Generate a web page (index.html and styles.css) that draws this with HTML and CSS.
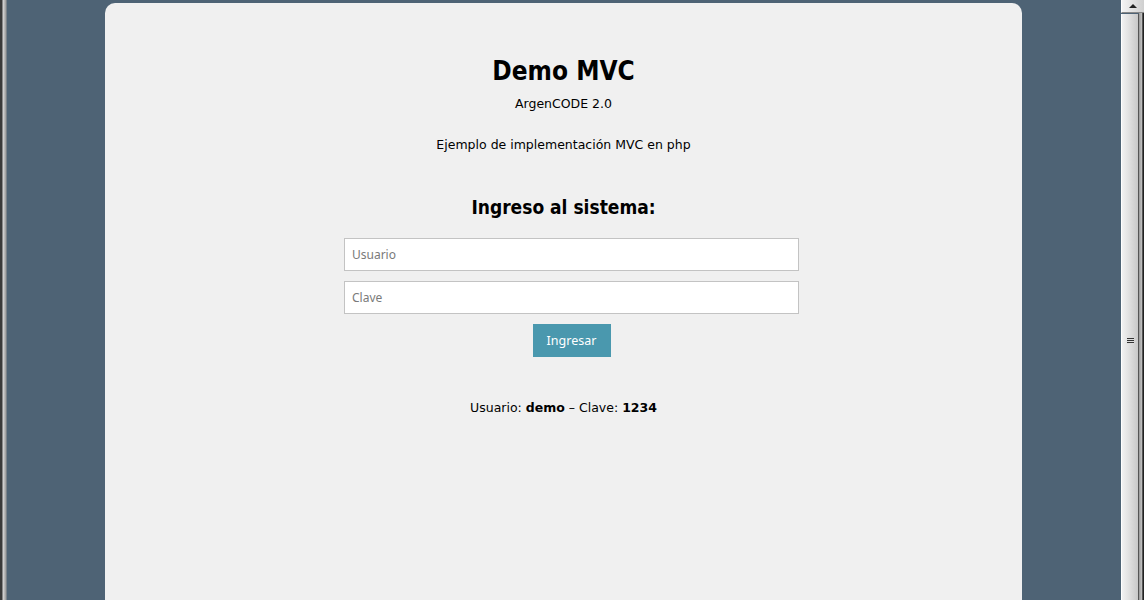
FILE: index.html
```html
<!DOCTYPE html>
<html lang="es">
<head>
    <meta charset="UTF-8">
    <title>Demo MVC</title>
    <link rel="stylesheet" href="styles.css">
</head>
<body>
<div class="frame-left"></div>
<div class="viewport">
    <div class="card">
        <h1>Demo MVC</h1>
        <p class="version">ArgenCODE 2.0</p>
        <p class="desc">Ejemplo de implementación MVC en php</p>

        <h2>Ingreso al sistema:</h2>
        <form class="login" onsubmit="return false;">
            <input type="text" placeholder="Usuario">
            <input type="password" placeholder="Clave">
            <button type="submit" class="btn">Ingresar</button>
        </form>

        <p class="hint">Usuario: <b>demo</b> &ndash; Clave: <b>1234</b></p>
    </div>
</div>
<div class="scrollbar">
    <div class="arrow-up"><span></span></div>
    <div class="track">
        <div class="thumb"><span class="grip"></span></div>
        <div class="rail"></div>
    </div>
</div>
</body>
</html>
```
FILE: styles.css
```css
html, body {
    margin: 0;
    height: 600px;
    overflow: hidden;
}
body {
    display: flex;
    background-color: #4e6375;
    font-family: "DejaVu Sans", Verdana, sans-serif;
    color: #000;
}

/* window edge on the left */
.frame-left {
    width: 7px;
    flex: none;
    background: linear-gradient(to right, #3a3a3a 0, #3a3a3a 2px, #d8d8d8 3px, #9a9a9a 6px, #5a6a78 7px);
}

.viewport {
    flex: 1;
    display: flex;
    justify-content: center;
    padding-top: 3px;
}

.card {
    width: 917px;
    background-color: #f0f0f0;
    border-radius: 10px 10px 0 0;
    display: flex;
    flex-direction: column;
    align-items: center;
}

h1 {
    font-family: "DejaVu Sans Condensed", "DejaVu Sans", sans-serif;
    font-size: 26px;
    font-weight: bold;
    margin: 52px 0 0 0;
    line-height: 32px;
}
.version {
    font-size: 12.5px;
    margin: 9px 0 0 0;
    line-height: 16px;
}
.desc {
    font-size: 12.5px;
    margin: 25px 0 0 0;
    line-height: 16px;
}
h2 {
    font-family: "DejaVu Sans Condensed", "DejaVu Sans", sans-serif;
    font-size: 19px;
    font-weight: bold;
    margin: 42px 0 0 0;
    line-height: 24px;
}

.login {
    width: 455px;
    display: flex;
    flex-direction: column;
    align-items: center;
    gap: 10px;
    margin: 19px 0 0 16px;
}
.login input {
    box-sizing: border-box;
    width: 455px;
    height: 33px;
    border: 1px solid #c3c3c3;
    background: #fff;
    padding: 0 7px;
    font-family: "Noto Sans", "Open Sans", sans-serif;
    font-size: 12px;
    outline: none;
}
.login input::placeholder {
    color: #7a7a7a;
}
.btn {
    width: 78px;
    height: 33px;
    border: none;
    background-color: #4a98ae;
    color: #fff;
    font-family: "Noto Sans", "Open Sans", sans-serif;
    font-size: 12.5px;
    cursor: pointer;
}

.hint {
    font-size: 12.5px;
    margin: 43px 0 0 0;
    line-height: 16px;
}

/* old style scrollbar on the right */
.scrollbar {
    width: 24px;
    flex: none;
    display: flex;
    flex-direction: column;
    background: #4e6375;
    overflow: hidden;
}
.arrow-up {
    height: 12px;
    flex: none;
    margin-left: 1px;
    border-left: 1px solid #fff;
    border-bottom: 1px solid #888;
    background: linear-gradient(to right, #f4f4f4, #cfcfcf);
    display: flex;
    justify-content: center;
    align-items: center;
}
.arrow-up span {
    width: 0;
    height: 0;
    border-left: 4px solid transparent;
    border-right: 4px solid transparent;
    border-bottom: 4px solid #222;
}
.track {
    flex: none;
    height: 654px;
    display: flex;
}
.thumb {
    width: 16px;
    margin-left: 1px;
    margin-top: 1px;
    border-left: 1px solid #fff;
    border-right: 1px solid #555;
    background: linear-gradient(to right, #f2f2f2, #e2e2e2 40%, #c8c8c8);
    display: flex;
    justify-content: center;
    align-items: center;
}
.grip {
    width: 7px;
    height: 6px;
    background: repeating-linear-gradient(to bottom, #333 0, #333 1px, #ddd 1px, #ddd 2px);
}
.rail {
    flex: 1;
    background: linear-gradient(to right, #9a9a9a, #bdbdbd 50%, #222 80%);
}
```
